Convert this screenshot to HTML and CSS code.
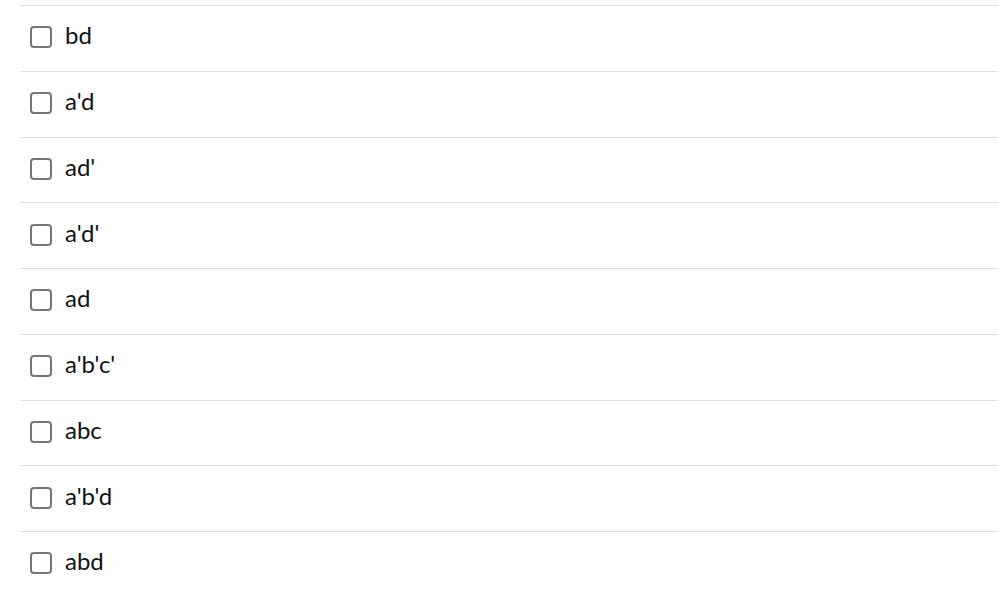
FILE: index.html
```html
<!DOCTYPE html>
<html>
<head>
<meta charset="utf-8">
<link rel="stylesheet" href="styles.css">
</head>
<body>
<ul class="options">
  <li class="option"><span class="box"></span><span class="label">bd</span></li>
  <li class="option"><span class="box"></span><span class="label">a'd</span></li>
  <li class="option"><span class="box"></span><span class="label">ad'</span></li>
  <li class="option"><span class="box"></span><span class="label">a'd'</span></li>
  <li class="option"><span class="box"></span><span class="label">ad</span></li>
  <li class="option"><span class="box"></span><span class="label">a'b'c'</span></li>
  <li class="option"><span class="box"></span><span class="label">abc</span></li>
  <li class="option"><span class="box"></span><span class="label">a'b'd</span></li>
  <li class="option"><span class="box"></span><span class="label">abd</span></li>
</ul>
</body>
</html>
```
FILE: styles.css
```css
html, body {
  margin: 0;
  padding: 0;
  background: #fff;
}
body {
  font-family: Lato, "Liberation Sans", sans-serif;
  color: #111;
}
.options {
  list-style: none;
  margin: 5px 1px 0 21px;
  padding: 0;
}
.option {
  box-sizing: border-box;
  height: 65.75px;
  border-top: 1px solid #dddddd;
  display: flex;
  align-items: center;
  padding-left: 9px;
  gap: 13px;
}
.box {
  box-sizing: border-box;
  width: 22px;
  height: 22px;
  border: 2px solid #767676;
  border-radius: 4px;
  flex: none;
  margin-bottom: 2px;
}
.label {
  font-size: 24px;
  line-height: 1;
  margin-bottom: 6px;
}
```
